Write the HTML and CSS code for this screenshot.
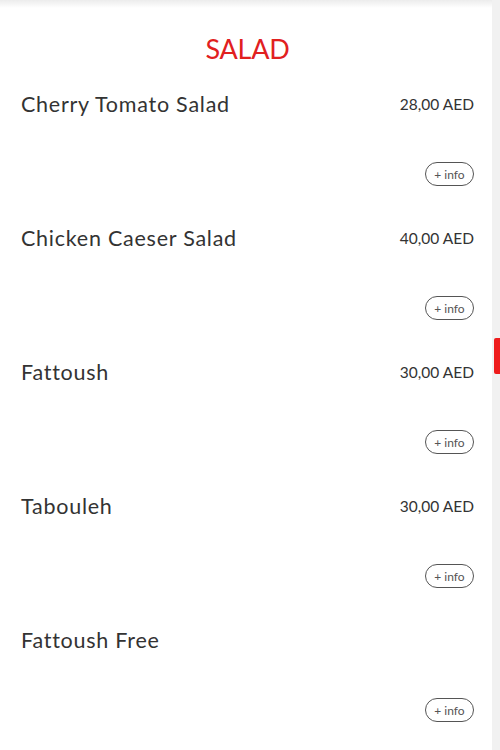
FILE: index.html
```html
<!DOCTYPE html>
<html lang="en">
<head>
    <meta charset="UTF-8">
    <meta name="viewport" content="width=device-width, initial-scale=1.0">
    <title>Menu - Salad</title>
    <link rel="stylesheet" href="styles.css">
</head>
<body>
    <div class="page">
        <div class="menu">
            <h2 class="category">SALAD</h2>

            <div class="item">
                <div class="item-head">
                    <span class="item-name">Cherry Tomato Salad</span>
                    <span class="item-price">28,00 AED</span>
                </div>
                <div class="item-foot">
                    <button class="info">+ info</button>
                </div>
            </div>

            <div class="item">
                <div class="item-head">
                    <span class="item-name">Chicken Caeser Salad</span>
                    <span class="item-price">40,00 AED</span>
                </div>
                <div class="item-foot">
                    <button class="info">+ info</button>
                </div>
            </div>

            <div class="item">
                <div class="item-head">
                    <span class="item-name">Fattoush</span>
                    <span class="item-price">30,00 AED</span>
                </div>
                <div class="item-foot">
                    <button class="info">+ info</button>
                </div>
            </div>

            <div class="item">
                <div class="item-head">
                    <span class="item-name">Tabouleh</span>
                    <span class="item-price">30,00 AED</span>
                </div>
                <div class="item-foot">
                    <button class="info">+ info</button>
                </div>
            </div>

            <div class="item">
                <div class="item-head">
                    <span class="item-name">Fattoush Free</span>
                    <span class="item-price"></span>
                </div>
                <div class="item-foot">
                    <button class="info">+ info</button>
                </div>
            </div>
        </div>
        <div class="scrollbar">
            <div class="thumb"></div>
        </div>
    </div>
</body>
</html>
```

FILE: styles.css
```css
body {
    margin: 0;
    font-family: Lato, "Noto Sans", sans-serif;
    background-color: white;
    color: #333;
}
.page {
    display: flex;
    height: 750px;
    overflow: hidden;
    position: relative;
}
.page::before {
    content: "";
    position: absolute;
    top: 0;
    left: 0;
    right: 0;
    height: 8px;
    background: linear-gradient(#ececec, rgba(255,255,255,0));
}
.menu {
    flex: 1;
    padding: 0 18px 0 21px;
}
.category {
    margin: 31px 0 0;
    height: 43px;
    text-align: center;
    color: #e1201f;
    font-size: 27px;
    font-weight: normal;
    line-height: 36px;
    letter-spacing: -0.3px;
}
.item {
    height: 134px;
}
.item-head {
    display: flex;
    justify-content: space-between;
    align-items: center;
    height: 32px;
    padding-top: 14px;
}
.item-name {
    font-size: 21.5px;
    letter-spacing: 0.75px;
}
.item-price {
    font-size: 15.5px;
}
.item-foot {
    display: flex;
    justify-content: flex-end;
    padding-top: 42px;
}
.info {
    width: 49px;
    height: 24px;
    padding: 0;
    border: 1px solid #555;
    border-radius: 12px;
    background: white;
    color: #555;
    font-family: Lato, "Noto Sans", sans-serif;
    font-size: 12px;
}
.scrollbar {
    width: 8px;
    background-color: #f1f1f1;
    position: relative;
}
.thumb {
    position: absolute;
    top: 338px;
    left: 2px;
    right: 0;
    height: 36px;
    background-color: #ee1c1c;
    border-radius: 2px 0 0 2px;
}
```
